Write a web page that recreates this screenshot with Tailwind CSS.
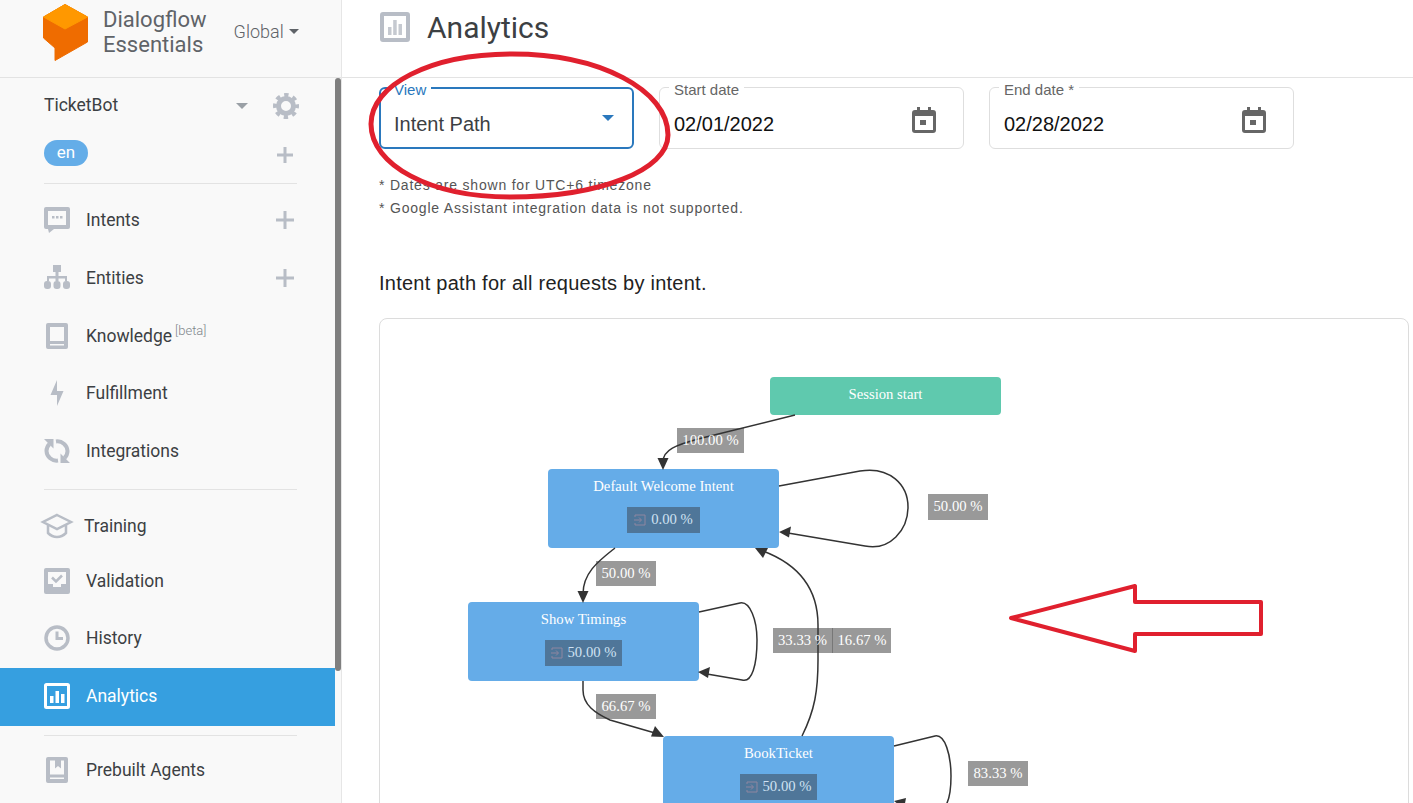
<!DOCTYPE html>
<html lang="en">
<head>
    <meta charset="UTF-8">
    <meta name="viewport" content="width=device-width, initial-scale=1.0">
    <title>Dialogflow Essentials - Analytics</title>
    <script src="https://cdn.jsdelivr.net/npm/@tailwindcss/browser@4"></script>
</head>
<body class="bg-white overflow-hidden">
    <div class="relative flex h-[803px] w-[1413px] overflow-hidden">
        <!-- Sidebar -->
        <aside class="relative w-[342px] shrink-0 h-full bg-[#f9f9f9] border-r border-[#e6e6e6] font-['Roboto',sans-serif] text-[#3c4043]">
            <div class="h-[78px] flex items-center border-b border-[#e3e3e3]">
                <svg class="ml-[42px] w-[47px] h-[59px] mt-[-12px]" viewBox="42 3 47 59" stroke-linejoin="round" stroke-width="1">
                    <path fill="#ef6c00" stroke="#ef6c00" d="M65 4.500 87.500 17V42L55 60.500V48L43.500 38V17Z"/>
                    <path fill="#ff9800" stroke="#ff9800" d="M65 4.500 87.500 17 65 29 43.500 17Z"/>
                </svg>
                <div class="ml-[14px] text-[22px] leading-[25px] text-[#5f6368] mt-[-14px]">
                    <div>Dialogflow</div>
                    <div>Essentials</div>
                </div>
                <div class="ml-[27px] mt-[-14px] flex items-center text-[#5f6368] text-[18px] font-light">
                    <span>Global</span>
                    <span class="ml-[5px] w-0 h-0 border-x-[5px] border-x-transparent border-t-[5px] border-t-[#5f6368]"></span>
                </div>
            </div>
            <div class="h-[56px] flex items-center pl-[44px] text-[17.500px]">
                <span class="mb-[1px]">TicketBot</span>
                <span class="ml-[118px] w-0 h-0 border-x-[6px] border-x-transparent border-t-[6px] border-t-[#9aa0a6]"></span>
                <svg class="ml-[25px] w-[26px] h-[26px]" viewBox="0 0 26 26" fill="none" stroke="#b8bdc6"><circle cx="13" cy="13" r="7.500" stroke-width="5"/><circle cx="13" cy="13" r="11" stroke-width="4" stroke-dasharray="4.320 4.320" stroke-dashoffset="2.160"/></svg>
            </div>
            <div class="h-[38px] flex items-center pl-[44px]">
                <span class="w-[44px] h-[26px] rounded-full bg-[#64ade8] text-white text-[17px] flex items-center justify-center">en</span>
                <svg class="ml-[188px] mt-[4px] w-[18px] h-[18px]" viewBox="0 0 18 18" fill="#b8bdc6"><path d="M7.500 1h3v6.500H17v3h-6.500V17h-3v-6.500H1v-3h6.500z"/></svg>
            </div>
            <div class="mt-[11px] ml-[44px] w-[253px] h-px bg-[#e3e3e3]"></div>

            <nav class="mt-[7.500px] text-[17.500px]">
                <a class="flex items-center h-[57.600px] pl-[44px]">
                    <svg class="w-[26px] h-[26px] mr-[16px]" viewBox="0 0 26 26" fill="#b8bdc6"><path fill-rule="evenodd" d="M2 0h22a2 2 0 0 1 2 2v18a2 2 0 0 1-2 2H10l-5 4-1-4H2a2 2 0 0 1-2-2V2a2 2 0 0 1 2-2zm2 4v14h18V4z"/><path d="M8 9h2.500v2.500H8zm4 0h2.500v2.500H12zm4 0h2.500v2.500H16z"/></svg>
                    <span class="flex-1">Intents</span>
                    <svg class="mr-[47px] w-[18px] h-[18px]" viewBox="0 0 18 18" fill="#b8bdc6"><path d="M7.500 0h3v7.500H18v3h-7.500V18h-3v-7.500H0v-3h7.500z"/></svg>
                </a>
                <a class="flex items-center h-[57.600px] pl-[44px]">
                    <svg class="w-[26px] h-[26px] mr-[16px]" viewBox="0 0 26 26" fill="#b8bdc6"><path d="M9 0h8v7h-2.500v4H23v5h-2v-2.500H14.500V16h-3v-2.500H5V16H3v-5h8.500V7H9z"/><rect x="0" y="16" width="7" height="8" rx="3"/><rect x="9.500" y="16" width="7" height="8" rx="3"/><rect x="19" y="16" width="7" height="8" rx="3"/></svg>
                    <span class="flex-1">Entities</span>
                    <svg class="mr-[47px] w-[18px] h-[18px]" viewBox="0 0 18 18" fill="#b8bdc6"><path d="M7.500 0h3v7.500H18v3h-7.500V18h-3v-7.500H0v-3h7.500z"/></svg>
                </a>
                <a class="flex items-center h-[57.600px] pl-[44px] pt-[2px]">
                    <svg class="w-[26px] h-[26px] mr-[16px]" viewBox="0 0 26 26" fill="#b8bdc6"><path fill-rule="evenodd" d="M4 0h18a2 2 0 0 1 2 2v22a2 2 0 0 1-2 2H4a2 2 0 0 1-2-2V2a2 2 0 0 1 2-2zm2 4v14h14V4zm0 17v1.500h14V21z"/></svg>
                    <span>Knowledge</span>
                    <span class="ml-[3px] mt-[-11px] text-[13px] font-light text-[#80868b]">[beta]</span>
                </a>
                <a class="flex items-center h-[57.600px] pl-[44px]">
                    <svg class="w-[26px] h-[26px] mr-[16px]" viewBox="0 0 26 26" fill="#b8bdc6"><path d="M13 0v11h6.500L13 26V15H6.500z"/></svg>
                    <span>Fulfillment</span>
                </a>
                <a class="flex items-center h-[57.600px] pl-[44px]">
                    <svg class="w-[26px] h-[26px] mr-[16px]" viewBox="0 0 26 26" fill="none" stroke="#b8bdc6" stroke-width="4"><path d="M12 3.500a10 10 0 0 1 11.500 9.500c0 3-1 5-3 7"/><path d="M14 22.500A10 10 0 0 1 2.500 13c0-3 1-5 3-7"/><path fill="#b8bdc6" stroke="none" d="M0 1h9.500v9.500zM26 25h-9.500v-9.500z"/></svg>
                    <span>Integrations</span>
                </a>
            </nav>
            <div class="mt-[9.500px] ml-[44px] w-[253px] h-px bg-[#e3e3e3]"></div>

            <nav class="mt-[8px] text-[17.500px]">
                <a class="flex items-center h-[56px] pl-[40px]">
                    <svg class="w-[34px] h-[26px] mr-[10px]" viewBox="0 0 34 26" fill="none" stroke="#b8bdc6" stroke-width="2.500"><path d="M17 2 31 9 17 16 3 9Z"/><path d="M8 12v8c3 3 6 4 9 4s6-1 9-4v-8"/></svg>
                    <span>Training</span>
                </a>
                <a class="flex items-center h-[55px] pl-[44px]">
                    <svg class="w-[26px] h-[26px] mr-[16px]" viewBox="0 0 26 26"><rect width="26" height="26" rx="2" fill="#b8bdc6"/><path fill="#f9f9f9" d="M4 4h18v12h-5v3H9v-3H4z"/><path fill="none" stroke="#b8bdc6" stroke-width="2.500" d="M8 9.500l4 4 6-6"/></svg>
                    <span>Validation</span>
                </a>
                <a class="flex items-center h-[58px] pl-[44px]">
                    <svg class="w-[26px] h-[26px] mr-[16px]" viewBox="0 0 26 26" fill="none" stroke="#b8bdc6"><circle cx="13" cy="13" r="11" stroke-width="3.500"/><path stroke-width="3" d="M13 6.500v7h6"/></svg>
                    <span>History</span>
                </a>
                <a class="mt-[1px] flex items-center h-[58px] pl-[44px] pb-[2px] mr-[6px] bg-[#369fe0] text-white">
                    <svg class="w-[26px] h-[26px] mr-[16px]" viewBox="0 0 26 26"><rect x="1.500" y="1.500" width="23" height="23" fill="#369fe0" stroke="#fff" stroke-width="3" rx="1"/><path fill="#fff" d="M6 13h3.500v7H6zM11.500 8H15v12h-3.500zM17 11h3.500v9H17z"/></svg>
                    <span>Analytics</span>
                </a>
            </nav>
            <div class="mt-[9px] ml-[44px] w-[253px] h-px bg-[#e3e3e3]"></div>
            <a class="mt-[5px] flex items-center h-[58px] pl-[44px] text-[17.500px]">
                <svg class="w-[26px] h-[26px] mr-[16px]" viewBox="0 0 26 26" fill="#b8bdc6"><path fill-rule="evenodd" d="M4 0h18a2 2 0 0 1 2 2v22a2 2 0 0 1-2 2H4a2 2 0 0 1-2-2V2a2 2 0 0 1 2-2zm2 3.500v14h14v-14h-3v8l-3-2.500-3 2.500v-8zm0 17v1.500h14v-1.500z"/></svg>
                <span>Prebuilt Agents</span>
            </a>

            <!-- scrollbar -->
            <div class="absolute right-0 top-[78px] w-[6px] h-[593px] rounded-full bg-[#7f7f7f]"></div>
        </aside>

        <!-- Main -->
        <main class="flex-1 min-w-0 font-['Liberation_Sans',Arial,sans-serif] text-[#3c4043]">
            <div class="h-[78px] flex items-start border-b border-[#e3e3e3] pl-[38px]">
                <svg class="mt-[12px] w-[30px] h-[30px]" viewBox="0 0 30 30"><rect x="2" y="2" width="26" height="26" fill="#fff" stroke="#b8bdc6" stroke-width="4" rx="1"/><path fill="#c5c9d0" d="M8 15h3.500v8H8zM13.200 8h3.500v15h-3.500zM18.500 12H22v11h-3.500z"/></svg>
                <h1 class="ml-[17px] mt-[8px] font-['Roboto',sans-serif] text-[30px] leading-[40px] text-[#3c4043]">Analytics</h1>
            </div>

            <div class="pl-[37px] pt-[9px] flex gap-[25px]">
                <div class="relative w-[255px] h-[62px] rounded-[6px] border-2 border-[#2a78bd]">
                    <span class="absolute left-[8px] top-[-7px] bg-white px-[5px] text-[15px] leading-[15px] text-[#2a78bd]">View</span>
                    <span class="absolute left-[13px] top-[23px] text-[20px] leading-[24px]">Intent Path</span>
                    <span class="absolute left-[221px] top-[26px] w-0 h-0 border-x-[6px] border-x-transparent border-t-[6px] border-t-[#2a78bd]"></span>
                </div>
                <div class="relative w-[305px] h-[62px] rounded-[6px] border border-[#dedede]">
                    <span class="absolute left-[9px] top-[-6px] bg-white px-[5px] text-[15px] leading-[15px] text-[#666]">Start date</span>
                    <span class="absolute left-[14px] top-[24px] text-[20px] leading-[24px] text-[#111]">02/01/2022</span>
                    <svg class="absolute left-[252px] top-[19px] w-[24px] h-[26px]" viewBox="0 0 24 26" fill="#666"><path fill-rule="evenodd" d="M5 0h3v3h8V0h3v3h2a3 3 0 0 1 3 3v17a3 3 0 0 1-3 3H3a3 3 0 0 1-3-3V6a3 3 0 0 1 3-3h2zM3 9v14h18V9z"/><rect x="8" y="13" width="6" height="5"/></svg>
                </div>
                <div class="relative w-[305px] h-[62px] rounded-[6px] border border-[#dedede]">
                    <span class="absolute left-[9px] top-[-6px] bg-white px-[5px] text-[15px] leading-[15px] text-[#666]">End date *</span>
                    <span class="absolute left-[14px] top-[24px] text-[20px] leading-[24px] text-[#111]">02/28/2022</span>
                    <svg class="absolute left-[252px] top-[19px] w-[24px] h-[26px]" viewBox="0 0 24 26" fill="#666"><path fill-rule="evenodd" d="M5 0h3v3h8V0h3v3h2a3 3 0 0 1 3 3v17a3 3 0 0 1-3 3H3a3 3 0 0 1-3-3V6a3 3 0 0 1 3-3h2zM3 9v14h18V9z"/><rect x="8" y="13" width="6" height="5"/></svg>
                </div>
            </div>

            <div class="pl-[37px] mt-[25px] text-[14px] leading-[23px] tracking-[0.8px] text-[#555]">
                <p>* Dates are shown for UTC+6 timezone</p>
                <p>* Google Assistant integration data is not supported.</p>
            </div>

            <h2 class="pl-[37px] mt-[50px] text-[20px] leading-[26px] tracking-[0.25px] text-[#222]">Intent path for all requests by intent.</h2>

            <!-- Flow diagram -->
            <div class="relative ml-[37px] mt-[22px] w-[1030px] h-[520px] rounded-[8px] border border-[#dcdcdc] font-['Liberation_Serif',serif] text-white text-[14.700px]">
                <div class="absolute left-[390px] top-[58px] w-[231px] h-[38px] pb-[4px] rounded-[4px] bg-[#5fc9ae] flex items-center justify-center">Session start</div>

                <div class="absolute left-[168px] top-[150px] w-[231px] h-[79px] rounded-[4px] bg-[#65ace8] flex flex-col items-center pt-[8px]">
                    <span class="leading-[18px]">Default Welcome Intent</span>
                    <span class="mt-[12px] h-[26px] px-[7px] pb-[2px] flex items-center gap-[5px] bg-[#4f7699] text-[#cfe2f3]">
                        <svg class="w-[12px] h-[12px] mt-[2px]" viewBox="0 0 12 12" fill="none" stroke="#8f86a0"><path d="M1 3V1h10v10H1V9M0 6h7M5 3.500 7.500 6 5 8.500"/></svg>0.00 %</span>
                </div>
                <div class="absolute left-[88px] top-[283px] w-[231px] h-[79px] rounded-[4px] bg-[#65ace8] flex flex-col items-center pt-[8px]">
                    <span class="leading-[18px]">Show Timings</span>
                    <span class="mt-[12px] h-[26px] px-[6px] pb-[2px] flex items-center gap-[5px] bg-[#4f7699] text-[#cfe2f3]">
                        <svg class="w-[12px] h-[12px] mt-[2px]" viewBox="0 0 12 12" fill="none" stroke="#8f86a0"><path d="M1 3V1h10v10H1V9M0 6h7M5 3.500 7.500 6 5 8.500"/></svg>50.00 %</span>
                </div>
                <div class="absolute left-[283px] top-[417px] w-[231px] h-[79px] rounded-[4px] bg-[#65ace8] flex flex-col items-center pt-[8px]">
                    <span class="leading-[18px]">BookTicket</span>
                    <span class="mt-[12px] h-[26px] px-[6px] pb-[2px] flex items-center gap-[5px] bg-[#4f7699] text-[#cfe2f3]">
                        <svg class="w-[12px] h-[12px] mt-[2px]" viewBox="0 0 12 12" fill="none" stroke="#8f86a0"><path d="M1 3V1h10v10H1V9M0 6h7M5 3.500 7.500 6 5 8.500"/></svg>50.00 %</span>
                </div>

                <!-- label text sits above the edges, label background below them -->
                <span class="absolute left-[297px] top-[109px] w-[67px] h-[25px] pb-[1px] bg-[#999] flex items-center justify-center"><span class="relative z-[2]">100.00 %</span></span>
                <span class="absolute left-[548px] top-[175px] w-[60px] h-[26px] pb-[1px] bg-[#999] flex items-center justify-center"><span class="relative z-[2]">50.00 %</span></span>
                <span class="absolute left-[216px] top-[242px] w-[60px] h-[25px] pb-[1px] bg-[#999] flex items-center justify-center"><span class="relative z-[2]">50.00 %</span></span>
                <span class="absolute left-[393px] top-[309px] w-[60px] h-[25px] pb-[1px] bg-[#999] border-r border-[#777] flex items-center justify-center"><span class="relative z-[2]">33.33 %</span></span>
                <span class="absolute left-[453px] top-[309px] w-[58px] h-[25px] pb-[1px] bg-[#999] flex items-center justify-center"><span class="relative z-[2]">16.67 %</span></span>
                <span class="absolute left-[216px] top-[375px] w-[60px] h-[25px] pb-[1px] bg-[#999] flex items-center justify-center"><span class="relative z-[2]">66.67 %</span></span>
                <span class="absolute left-[588px] top-[442px] w-[60px] h-[25px] pb-[1px] bg-[#999] flex items-center justify-center"><span class="relative z-[2]">83.33 %</span></span>

                <!-- edges, in page coordinates -->
                <svg class="absolute left-0 top-0 z-[1] pointer-events-none" width="1028" height="518" viewBox="380 319 1028 518" fill="none" stroke="#333" stroke-width="1.500">
                    <path d="M795 415 702 438C675 445 663 450 663 462"/>
                    <path d="M779 486 860 471C890 466 908 485 908 507C908 530 890 551 865 546L788 533"/>
                    <path d="M615 548C600 560 583 572 583 594"/>
                    <path d="M699 612 740 603C750 601 757 620 757 640C757 665 752 683 742 680L707 674"/>
                    <path d="M583 681V690C583 705 595 713 610 720L655 733"/>
                    <path d="M802 736C815 710 818 690 818 660V625C818 590 800 565 763 551"/>
                    <path d="M894 746 935 736C945 734 951 755 951 776C951 800 946 815 930 812L904 804"/>
                    <g fill="#333" stroke="none">
                        <path d="M663 470 657.500 458H668.500Z"/>
                        <path d="M779 532 791 526.500 789 537.500Z"/>
                        <path d="M583 603 577.500 591H588.500Z"/>
                        <path d="M698 672 710 667 708 678Z"/>
                        <path d="M664 737 651 736.500 655 726Z"/>
                        <path d="M755 548 768 548 763 558Z"/>
                        <path d="M894 801 906 798 904 809Z"/>
                    </g>
                </svg>
            </div>
        </main>

        <!-- red annotations drawn over the screenshot -->
        <svg class="absolute left-0 top-0 z-[3] pointer-events-none" width="1413" height="803" viewBox="0 0 1413 803" fill="none" stroke="#e0202e">
            <path stroke-width="5" d="M512 54C600 54 668 90 668 135C668 170 600 197 510 197C430 197 371 165 371 124C371 85 430 54 512 54Z"/>
            <path stroke-width="4" stroke-linejoin="round" d="M1011 618 1135 586V602H1261V634H1135V651Z"/>
        </svg>
    </div>
</body>
</html>
